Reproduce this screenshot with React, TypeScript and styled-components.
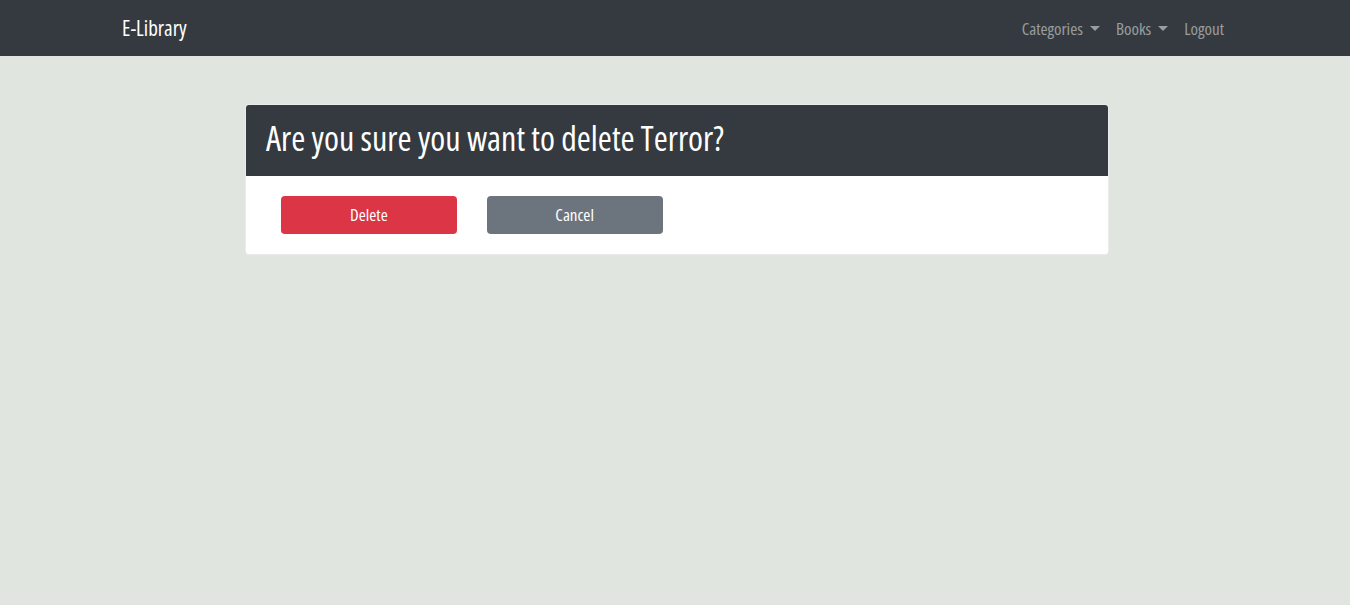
import React from "react";
import styled, { createGlobalStyle } from "styled-components";

const Global = createGlobalStyle`
  html, body { margin: 0; padding: 0; }
  body {
    background: #e0e6df;
    font-family: "Open Sans", "Roboto Condensed", sans-serif;
    font-stretch: 75%;
    font-weight: 500;
    color: #212529;
    min-height: 605px;
  }
  * { box-sizing: border-box; }
`;

const Navbar = styled.nav`
  height: 56px;
  background: #343a40;
  display: flex;
  justify-content: center;
`;

const NavInner = styled.div`
  width: 1140px;
  padding: 0 13px 0 15px;
  display: flex;
  align-items: center;
  justify-content: space-between;
`;

const Brand = styled.a`
  color: #fff;
  font-size: 21px;
  padding-left: 2px;
  text-decoration: none;
`;

const NavList = styled.ul`
  list-style: none;
  margin: 0;
  padding: 0;
  display: flex;
  align-items: center;
`;

const NavLink = styled.a`
  display: flex;
  align-items: center;
  color: rgba(255, 255, 255, 0.5);
  font-size: 17px;
  padding: 8px;
  text-decoration: none;
`;

const Caret = styled.span`
  display: inline-block;
  margin-left: 7px;
  width: 0;
  height: 0;
  border-top: 5px solid rgba(255, 255, 255, 0.5);
  border-left: 5px solid transparent;
  border-right: 5px solid transparent;
`;

const Main = styled.main`
  display: flex;
  justify-content: center;
  padding-top: 48px;
  padding-left: 4px;
`;

const Card = styled.div`
  width: 864px;
  background: #fff;
  border-radius: 4px;
  border: 1px solid rgba(0, 0, 0, 0.08);
  overflow: hidden;
`;

const CardHeader = styled.div`
  background: #343a40;
  height: 71px;
  padding: 0 20px 5px;
  display: flex;
  align-items: center;
`;

const Title = styled.h2`
  margin: 0;
  color: #fff;
  font-size: 34px;
  font-weight: 500;
`;

const CardBody = styled.div`
  padding: 20px 35px;
  display: flex;
  gap: 30px;
`;

const Button = styled.button<{ $variant: "danger" | "secondary" }>`
  width: 175.75px;
  height: 38px;
  border: none;
  border-radius: 4px;
  color: #fff;
  font-family: inherit;
  font-stretch: inherit;
  font-weight: 500;
  font-size: 17px;
  padding: 0 0 2px;
  background: ${(p) => (p.$variant === "danger" ? "#dc3545" : "#6c757d")};
  cursor: pointer;
`;

export default function App() {
  return (
    <>
      <Global />
      <Navbar>
        <NavInner>
          <Brand href="#">E-Library</Brand>
          <NavList>
            <li>
              <NavLink href="#">
                Categories
                <Caret />
              </NavLink>
            </li>
            <li>
              <NavLink href="#">
                Books
                <Caret />
              </NavLink>
            </li>
            <li>
              <NavLink href="#">Logout</NavLink>
            </li>
          </NavList>
        </NavInner>
      </Navbar>
      <Main>
        <Card>
          <CardHeader>
            <Title>Are you sure you want to delete Terror?</Title>
          </CardHeader>
          <CardBody>
            <Button $variant="danger">Delete</Button>
            <Button $variant="secondary">Cancel</Button>
          </CardBody>
        </Card>
      </Main>
    </>
  );
}
